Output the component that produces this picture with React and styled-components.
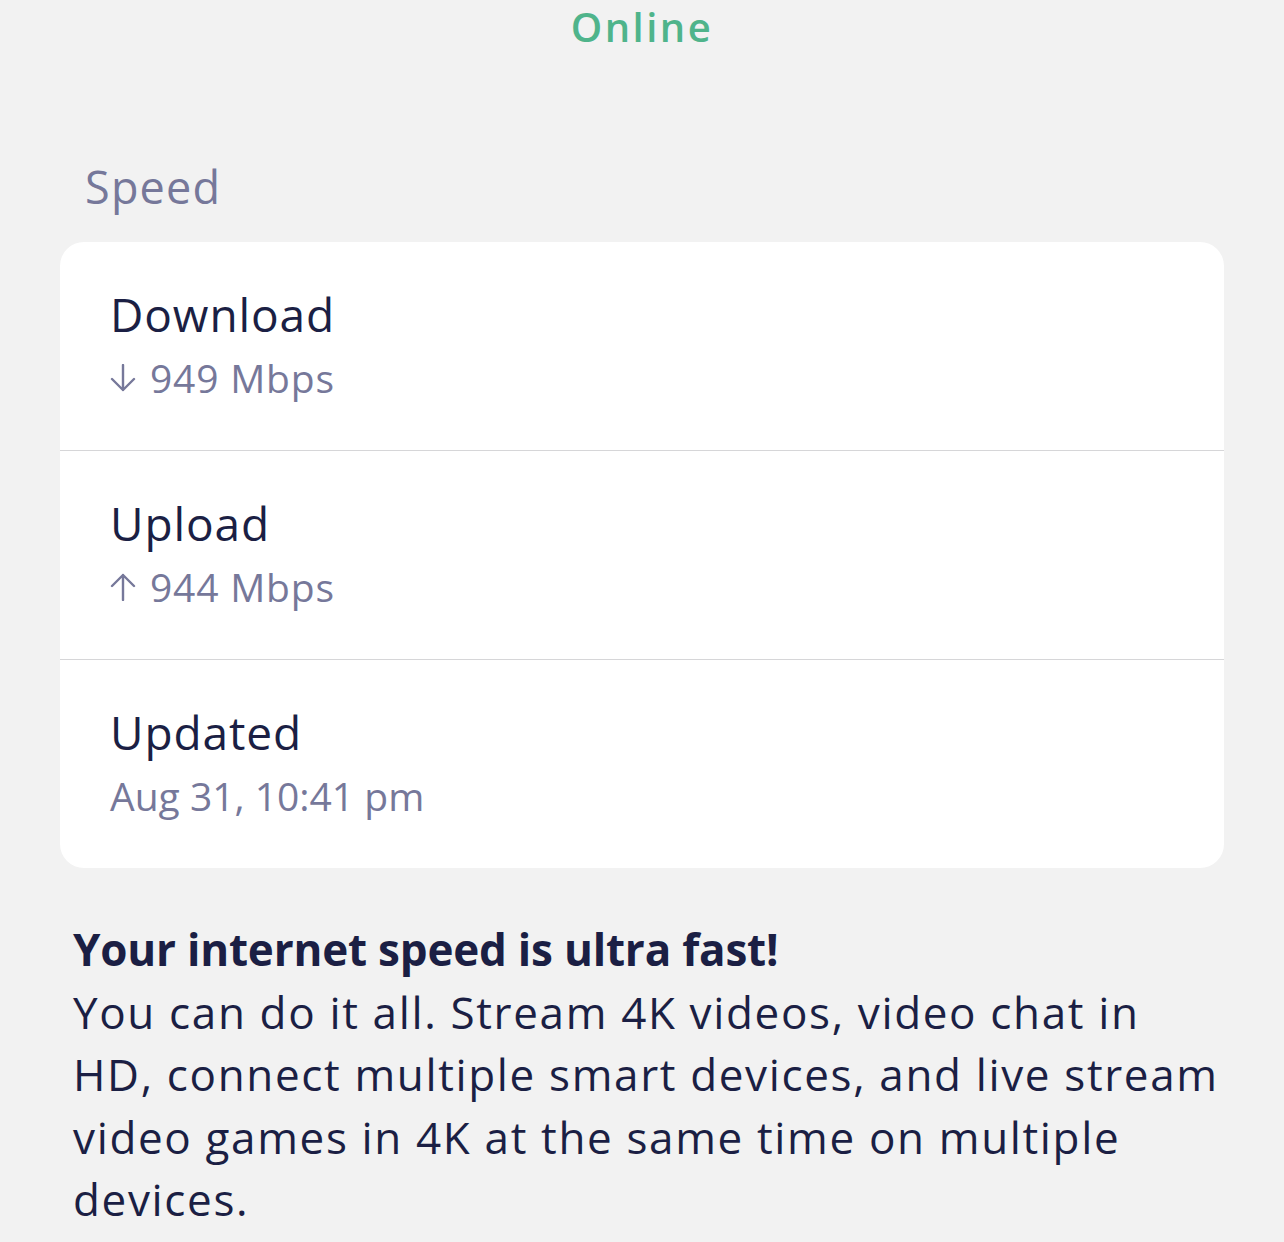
import React from "react";
import styled, { createGlobalStyle } from "styled-components";

const COLOR = {
  BG: "#f2f2f2",
  WHITE: "#ffffff",
  NAVY: "#1b1f44",
  GREY: "#76789a",
  GREEN: "#4fb48b",
  LINE: "#d6d6d8",
};

const GlobalStyle = createGlobalStyle`
  html, body {
    margin: 0;
    padding: 0;
    background: ${COLOR.BG};
  }
  body {
    font-family: "Open Sans", "Liberation Sans", sans-serif;
    -webkit-font-smoothing: antialiased;
  }
`;

const Page = styled.div`
  width: 1284px;
  min-height: 1242px;
  display: flex;
  flex-direction: column;
  background: ${COLOR.BG};
`;

const Status = styled.div`
  text-align: center;
  color: ${COLOR.GREEN};
  font-size: 40px;
  font-weight: 600;
  line-height: 46px;
  letter-spacing: 2.5px;
  margin-top: 4px;
`;

const SectionLabel = styled.div`
  color: ${COLOR.GREY};
  font-size: 45px;
  line-height: 56px;
  letter-spacing: 1.2px;
  padding: 0 85px;
  margin-top: 109px;
`;

const Card = styled.div`
  margin: 27px 60px 0;
  background: ${COLOR.WHITE};
  border-radius: 24px;
  display: flex;
  flex-direction: column;
`;

const Row = styled.div`
  height: 208px;
  display: flex;
  flex-direction: column;
  justify-content: center;
  padding: 0 50px;
  border-top: ${({ $first }) => ($first ? "none" : `1px solid ${COLOR.LINE}`)};
`;

const Title = styled.div`
  color: ${COLOR.NAVY};
  font-size: 46px;
  line-height: 52px;
  letter-spacing: 0.9px;
`;

const Value = styled.div`
  display: flex;
  align-items: center;
  gap: 14px;
  margin-top: 12px;
  color: ${COLOR.GREY};
  font-size: 39px;
  line-height: 52px;
  letter-spacing: ${({ $wide }) => ($wide ? "0.8px" : "0")};
`;

const Arrow = styled.svg`
  width: 26px;
  height: 28px;
  flex: none;
  transform: ${({ $up }) => ($up ? "rotate(180deg)" : "none")};
`;

const Message = styled.div`
  padding: 50px 40px 0 73px;
  color: ${COLOR.NAVY};
  font-size: 44px;
  line-height: 62.5px;
  letter-spacing: 1.65px;
  white-space: nowrap;
`;

const Strong = styled.div`
  font-weight: 700;
  letter-spacing: -0.2px;
`;

const ArrowIcon = ({ up }) => (
  <Arrow $up={up} viewBox="0 0 26 28" fill="none">
    <path
      d="M13 1v25M2 15l11 11 11-11"
      stroke={COLOR.GREY}
      strokeWidth="2.4"
      strokeLinecap="round"
      strokeLinejoin="round"
    />
  </Arrow>
);

const rows = [
  { title: "Download", value: "949 Mbps", arrow: "down" },
  { title: "Upload", value: "944 Mbps", arrow: "up" },
  { title: "Updated", value: "Aug 31, 10:41 pm" },
];

export default () => (
  <Page>
    <GlobalStyle />
    <Status>Online</Status>
    <SectionLabel>Speed</SectionLabel>
    <Card>
      {rows.map((row, i) => (
        <Row key={row.title} $first={i === 0}>
          <Title>{row.title}</Title>
          <Value $wide={!!row.arrow}>
            {row.arrow && <ArrowIcon up={row.arrow === "up"} />}
            {row.value}
          </Value>
        </Row>
      ))}
    </Card>
    <Message>
      <Strong>Your internet speed is ultra fast!</Strong>
      You can do it all. Stream 4K videos, video chat in
      <br />
      HD, connect multiple smart devices, and live stream
      <br />
      video games in 4K at the same time on multiple
      <br />
      devices.
    </Message>
  </Page>
);
